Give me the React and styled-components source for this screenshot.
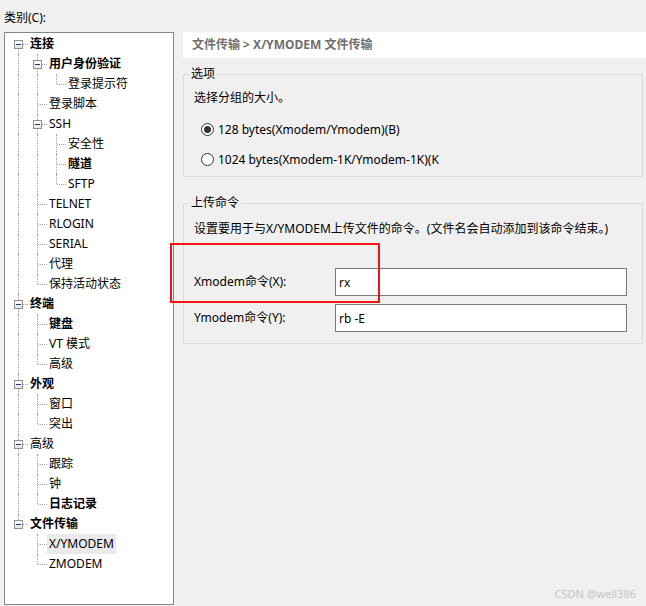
import styled, { createGlobalStyle, css } from "styled-components";

const GlobalStyle = createGlobalStyle`
  html, body {
    margin: 0;
    padding: 0;
    background: #f0f0f0;
  }
`;

const tree = [
  { t: "连接", b: 1, c: [
    { t: "用户身份验证", b: 1, c: [{ t: "登录提示符" }] },
    { t: "登录脚本" },
    { t: "SSH", c: [{ t: "安全性" }, { t: "隧道", b: 1 }, { t: "SFTP" }] },
    { t: "TELNET" },
    { t: "RLOGIN" },
    { t: "SERIAL" },
    { t: "代理" },
    { t: "保持活动状态" },
  ] },
  { t: "终端", b: 1, c: [{ t: "键盘", b: 1 }, { t: "VT 模式" }, { t: "高级" }] },
  { t: "外观", b: 1, c: [{ t: "窗口" }, { t: "突出" }] },
  { t: "高级", c: [{ t: "跟踪" }, { t: "钟" }, { t: "日志记录", b: 1 }] },
  { t: "文件传输", b: 1, c: [{ t: "X/YMODEM", sel: 1 }, { t: "ZMODEM" }] },
];

function flatten(nodes, guides = [], out = []) {
  nodes.forEach((n, i) => {
    const last = i === nodes.length - 1;
    out.push({ n, guides, last, first: guides.length === 0 && i === 0 });
    if (n.c) flatten(n.c, [...guides, !last], out);
  });
  return out;
}

const rows = flatten(tree);

export default function App() {
  return (
    <Page>
      <GlobalStyle />
      <CategoryLabel>类别(C):</CategoryLabel>
      <Body>
        <TreePanel>
          {rows.map((r, i) => (
            <Row key={i}>
              {r.guides.map((g, j) => (
                <Guide key={j} $on={g} />
              ))}
              <Connector $first={r.first} $last={r.last}>
                {r.n.c && <Expander />}
              </Connector>
              <NodeLabel $bold={r.n.b} $sel={r.n.sel}>{r.n.t}</NodeLabel>
            </Row>
          ))}
        </TreePanel>
        <RightPanel>
          <Crumb>文件传输 &gt; X/YMODEM 文件传输</Crumb>
          <Group $top={8} $pt={8} $pb={2}>
            <Legend>选项</Legend>
            <Text>选择分组的大小。</Text>
            <Radios>
              <RadioRow>
                <Radio $checked />
                128 bytes(Xmodem/Ymodem)(B)
              </RadioRow>
              <RadioRow>
                <Radio />
                1024 bytes(Xmodem-1K/Ymodem-1K)(K
              </RadioRow>
            </Radios>
          </Group>
          <Group $top={18} $pt={10} $pb={11}>
            <Legend>上传命令</Legend>
            <Text>设置要用于与X/YMODEM上传文件的命令。(文件名会自动添加到该命令结束。)</Text>
            <Fields>
              <FieldLabel>Xmodem命令(X):</FieldLabel>
              <Field readOnly defaultValue="rx" />
              <FieldLabel>Ymodem命令(Y):</FieldLabel>
              <Field readOnly defaultValue="rb -E" />
            </Fields>
          </Group>
        </RightPanel>
      </Body>
      <Highlight />
      <Watermark>CSDN @well386</Watermark>
    </Page>
  );
}

const font = `"Segoe UI", "Noto Sans", "Noto Sans CJK SC", sans-serif`;

const Page = styled.div`
  position: relative;
  width: 646px;
  height: 606px;
  overflow: hidden;
  background: #f0f0f0;
  font-family: ${font};
  font-size: 12px;
  color: #000;
`;

const CategoryLabel = styled.div`
  padding: 10px 0 6px 4px;
  line-height: 16px;
`;

const Body = styled.div`
  display: flex;
  gap: 9px;
  padding-left: 4px;
  height: 574px;
`;

const TreePanel = styled.div`
  box-sizing: border-box;
  width: 170px;
  height: 573px;
  background: #fff;
  border: 1px solid #828790;
  padding: 1px 0 0 4px;
`;

const Row = styled.div`
  display: flex;
  align-items: stretch;
  height: 20px;
  line-height: 20px;
  white-space: nowrap;
`;

const dot = "1px dotted #a0a0a0";

const Guide = styled.span`
  position: relative;
  width: 19px;
  flex: none;
  ${(p) => p.$on && css`
    &::before {
      content: "";
      position: absolute;
      left: 9px;
      top: 0;
      bottom: 0;
      border-left: ${dot};
    }
  `}
`;

const Connector = styled.span`
  position: relative;
  width: 19px;
  flex: none;
  &::before {
    content: "";
    position: absolute;
    left: 9px;
    top: ${(p) => (p.$first ? "10px" : "0")};
    bottom: ${(p) => (p.$last ? "10px" : "0")};
    border-left: ${dot};
  }
  &::after {
    content: "";
    position: absolute;
    left: 10px;
    right: 0;
    top: 10px;
    border-top: ${dot};
  }
`;

const Expander = styled.span`
  position: absolute;
  z-index: 1;
  left: 5px;
  top: 6px;
  width: 7px;
  height: 7px;
  border: 1px solid #919191;
  background: linear-gradient(#ffffff, #e6e6e6);
  &::after {
    content: "";
    position: absolute;
    left: 1px;
    top: 3px;
    width: 5px;
    height: 1px;
    background: #1f3a6e;
  }
`;

const NodeLabel = styled.span`
  padding: 0 2px;
  font-weight: ${(p) => (p.$bold ? 700 : 400)};
  background: ${(p) => (p.$sel ? "#eaeaea" : "transparent")};
`;

const RightPanel = styled.div`
  flex: 1;
  display: flex;
  flex-direction: column;
`;

const Crumb = styled.div`
  height: 26px;
  line-height: 26px;
  background: #fff;
  padding-left: 9px;
  font-weight: 700;
  color: #6f6f6f;
`;

const Group = styled.fieldset`
  margin: ${(p) => p.$top}px 3px 0 0;
  padding: ${(p) => p.$pt}px 15px ${(p) => p.$pb}px 10px;
  border: 1px solid #dcdcdc;
  min-width: 0;
`;

const Legend = styled.legend`
  margin-left: -5px;
  padding: 0 2px;
  line-height: 16px;
`;

const Text = styled.div`
  line-height: 16px;
  white-space: nowrap;
`;

const Radios = styled.div`
  margin-top: 8px;
`;

const RadioRow = styled.div`
  display: flex;
  align-items: center;
  height: 30px;
  gap: 4px;
  padding-left: 7px;
  white-space: nowrap;
`;

const Radio = styled.span`
  position: relative;
  box-sizing: border-box;
  width: 13px;
  height: 13px;
  border: 1px solid #333;
  border-radius: 50%;
  background: #fff;
  ${(p) => p.$checked && css`
    &::after {
      content: "";
      position: absolute;
      left: 2px;
      top: 2px;
      width: 7px;
      height: 7px;
      border-radius: 50%;
      background: #333;
    }
  `}
`;

const Fields = styled.div`
  display: grid;
  grid-template-columns: 141px 1fr;
  row-gap: 8px;
  align-items: center;
  margin-top: 31px;
`;

const FieldLabel = styled.div`
  line-height: 16px;
`;

const Field = styled.input`
  box-sizing: border-box;
  height: 28px;
  margin: 0;
  padding: 0 3px;
  border: 1px solid #7a7a7a;
  background: #fff;
  font-family: ${font};
  font-size: 12px;
  color: #000;
  outline: none;
`;

const Highlight = styled.div`
  position: absolute;
  left: 170px;
  top: 243px;
  width: 206px;
  height: 56px;
  border: 2px solid #f01414;
`;

const Watermark = styled.div`
  position: absolute;
  right: 10px;
  bottom: 5px;
  font-size: 11px;
  color: #c4c4c4;
  line-height: 14px;
`;
